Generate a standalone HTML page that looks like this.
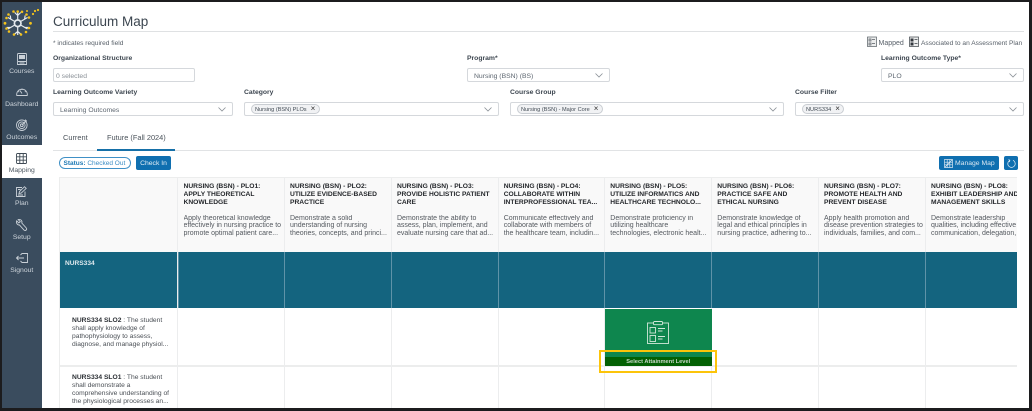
<!DOCTYPE html>
<html><head><meta charset="utf-8"><style>
html,body{margin:0;padding:0;width:1032px;height:411px;overflow:hidden;background:#1c1c1e}
*{box-sizing:border-box}
body{font-family:"Liberation Sans",sans-serif;position:relative}
.a{position:absolute;white-space:nowrap}
#main{position:absolute;left:41px;top:2px;width:988px;height:406px;background:#fff;overflow:hidden;filter:blur(.3px)}
#page{position:absolute;left:-41px;top:-2px;width:1032px;height:411px}
#side{position:absolute;left:2px;top:2px;width:39.500px;height:406px;background:#3a4c5e;filter:blur(.3px)}
.nl{position:absolute;left:0;width:39.500px;text-align:center;font-size:6.8px;color:#ccd3da;line-height:8px}
.ic{position:absolute;left:14px;fill:none;stroke:#c9d0d7;stroke-width:.9;overflow:visible}
.lb{position:absolute;font-size:6.8px;font-weight:bold;color:#3d4650;white-space:nowrap;line-height:9px}
.in{position:absolute;height:14px;background:#fff;border:1px solid #d5d8dc;border-radius:2px;font-size:6.8px;color:#5d6670;line-height:15.500px;white-space:nowrap}
.ch{position:absolute;top:4px;right:6px;width:8px;height:5px}
.tag{position:absolute;left:5.500px;top:1px;height:10px;border:1px solid #c9cdd2;background:#f1f2f4;border-radius:5px;font-size:5.6px;color:#434c55;line-height:8px;padding:0 3.500px;white-space:nowrap}
.tag b{font-weight:normal;margin-left:4px;font-size:8px;line-height:7px;color:#333}
.h{position:absolute;top:183px;width:102px;font-size:6.7px;line-height:7.75px;font-weight:bold;color:#24272b;white-space:nowrap;overflow:hidden}
.d{position:absolute;top:214.700px;width:102px;font-size:7px;line-height:7.75px;color:#54595f;white-space:nowrap;overflow:hidden}
.v{position:absolute;width:1.200px;background:#ecedee}
.tv{position:absolute;top:252px;height:56px;width:1px;background:#5f93a8}
.sl{position:absolute;left:72px;font-size:6.7px;line-height:8px;color:#4a4f55;white-space:nowrap}
.sl b{color:#2d3136}
</style></head><body>
<div id="main"><div id="page">
<div class="a" style="left:53px;top:12.500px;font-size:13.5px;line-height:18px;color:#3c4650">Curriculum Map</div>
<div class="a" style="left:53px;top:30.500px;width:971px;height:1px;background:#dfe1e3"></div>
<div class="a" style="left:53px;top:39.500px;font-size:6.6px;line-height:8px;color:#59616a">* indicates required field</div>

<div class="lb" style="left:53px;top:54px">Organizational Structure</div>
<div class="in" style="left:53px;top:68px;width:142px;padding-left:2px;color:#8a9097">0 selected</div>
<div class="lb" style="left:467px;top:54px">Program*</div>
<div class="in" style="left:467px;top:68px;width:143px;padding-left:6px">Nursing (BSN) (BS)<svg class="ch" viewBox="0 0 8 5"><path d="M.5.5 4 4 7.500.5" fill="none" stroke="#8a9097" stroke-width=".8"/></svg></div>
<div class="lb" style="left:881px;top:54px">Learning Outcome Type*</div>
<div class="in" style="left:881px;top:68px;width:143px;padding-left:6px">PLO<svg class="ch" viewBox="0 0 8 5"><path d="M.5.5 4 4 7.500.5" fill="none" stroke="#8a9097" stroke-width=".8"/></svg></div>

<div class="lb" style="left:53px;top:88px">Learning Outcome Variety</div>
<div class="in" style="left:53px;top:102px;width:180px;padding-left:6px">Learning Outcomes<svg class="ch" viewBox="0 0 8 5"><path d="M.5.5 4 4 7.500.5" fill="none" stroke="#8a9097" stroke-width=".8"/></svg></div>
<div class="lb" style="left:244px;top:88px">Category</div>
<div class="in" style="left:244px;top:102px;width:255px"><span class="tag">Nursing (BSN) PLOs<b>×</b></span><svg class="ch" viewBox="0 0 8 5"><path d="M.5.5 4 4 7.500.5" fill="none" stroke="#8a9097" stroke-width=".8"/></svg></div>
<div class="lb" style="left:510px;top:88px">Course Group</div>
<div class="in" style="left:510px;top:102px;width:274px"><span class="tag">Nursing (BSN) - Major Core<b>×</b></span><svg class="ch" viewBox="0 0 8 5"><path d="M.5.5 4 4 7.500.5" fill="none" stroke="#8a9097" stroke-width=".8"/></svg></div>
<div class="lb" style="left:795px;top:88px">Course Filter</div>
<div class="in" style="left:795px;top:102px;width:229px"><span class="tag">NURS334<b>×</b></span><svg class="ch" viewBox="0 0 8 5"><path d="M.5.5 4 4 7.500.5" fill="none" stroke="#8a9097" stroke-width=".8"/></svg></div>

<svg class="a" style="left:866.500px;top:36px" width="10" height="11" viewBox="0 0 10 11"><rect x=".5" y="1" width="9" height="9.500" fill="#eceded" stroke="#555c63" stroke-width=".7"/><path d="M2 3h2v2H2zM2 7h2v2H2zM5 3.500h3M5 7.500h3" fill="none" stroke="#555c63" stroke-width=".7"/></svg>
<div class="a" style="left:878.500px;top:38.500px;font-size:7px;line-height:9px;color:#59616a">Mapped</div>
<svg class="a" style="left:909px;top:36px" width="10" height="11" viewBox="0 0 10 11"><rect x=".5" y="1" width="9" height="9.500" fill="#eceded" stroke="#3a4047" stroke-width=".7"/><path d="M1.500 2.500h3v3h-3zM1.500 6.500h3v3h-3z" fill="#33383e"/><path d="M5.500 3.500h3M5.500 7.500h3" fill="none" stroke="#3a4047" stroke-width=".7"/></svg>
<div class="a" style="left:921px;top:38.500px;font-size:6.6px;line-height:9px;color:#59616a">Associated to an Assessment Plan</div>

<div class="a" style="left:63px;top:133px;font-size:7.4px;line-height:10px;color:#4a525a">Current</div>
<div class="a" style="left:107px;top:133px;font-size:7.4px;line-height:10px;color:#4a525a">Future (Fall 2024)</div>
<div class="a" style="left:53px;top:149.500px;width:971px;height:1px;background:#e1e3e5"></div>
<div class="a" style="left:97px;top:148.500px;width:78px;height:2px;background:#1670a8"></div>

<div class="a" style="left:58.500px;top:157px;width:72px;height:12px;border:1px solid #3f90c6;border-radius:6px;font-size:6.5px;line-height:11px;color:#3b8dc4;padding-left:4px"><b style="color:#1a78b5">Status:</b> Checked Out</div>
<div class="a" style="left:136px;top:156px;width:35px;height:14px;background:#0f6fb0;border-radius:2px;font-size:6.8px;line-height:15px;color:#e6f0f7;text-align:center">Check In</div>
<div class="a" style="left:939px;top:156px;width:60px;height:14px;background:#0f6fb0;border-radius:2px;font-size:6.8px;line-height:15px;color:#dbe8f2;padding-left:16px">Manage Map</div>
<svg class="a" style="left:944px;top:158.500px" width="9" height="9" viewBox="0 0 9 9"><path d="M.5.500h8v8h-8zM.5 3.200h8M.5 5.800h8M3.200.500v8M5.800.500v8M1 8 8 1" fill="none" stroke="#dbe8f2" stroke-width=".7"/></svg>
<div class="a" style="left:1004px;top:156px;width:14px;height:14px;background:#0f6fb0;border-radius:2px"></div>
<svg class="a" style="left:1006.500px;top:158.500px" width="9" height="9" viewBox="0 0 9 9"><path d="M3 1.300A3.700 3.700 0 1 0 6 1.300M3 1.300 1.500.5M3 1.300 2.400 3" fill="none" stroke="#e3eef6" stroke-width=".7"/></svg>

<!-- table -->
<div class="a" style="left:59px;top:177px;width:958px;height:75px;background:#f9f9f9"></div>
<div class="a" style="left:59px;top:176.500px;width:958px;height:1px;background:#eceded"></div>
<div class="a" style="left:59px;top:252px;width:958px;height:56px;background:#14647f"></div>
<div class="a" style="left:59px;top:365.200px;width:958px;height:1.500px;background:#eceded"></div>
<div class="a" style="left:58.500px;top:177px;width:1px;height:231px;background:#eceded"></div>
<div class="v" style="left:177.300px;top:177px;height:231px"></div>
<div class="v" style="left:284px;top:177px;height:231px"></div>
<div class="v" style="left:391px;top:177px;height:231px"></div>
<div class="v" style="left:497.500px;top:177px;height:231px"></div>
<div class="v" style="left:604px;top:177px;height:231px"></div>
<div class="v" style="left:711px;top:177px;height:231px"></div>
<div class="v" style="left:818px;top:177px;height:231px"></div>
<div class="v" style="left:925px;top:177px;height:231px"></div>
<div class="tv" style="left:177.500px"></div><div class="tv" style="left:284px"></div><div class="tv" style="left:391px"></div><div class="tv" style="left:497.500px"></div><div class="tv" style="left:604px"></div><div class="tv" style="left:711px"></div><div class="tv" style="left:818px"></div><div class="tv" style="left:925px"></div>

<div class="h" style="left:183.500px">NURSING (BSN) - PLO1:<br>APPLY THEORETICAL<br>KNOWLEDGE</div>
<div class="d" style="left:183.500px">Apply theoretical knowledge<br>effectively in nursing practice to<br>promote optimal patient care...</div>
<div class="h" style="left:290px">NURSING (BSN) - PLO2:<br>UTILIZE EVIDENCE-BASED<br>PRACTICE</div>
<div class="d" style="left:290px">Demonstrate a solid<br>understanding of nursing<br>theories, concepts, and princi...</div>
<div class="h" style="left:397px">NURSING (BSN) - PLO3:<br>PROVIDE HOLISTIC PATIENT<br>CARE</div>
<div class="d" style="left:397px">Demonstrate the ability to<br>assess, plan, implement, and<br>evaluate nursing care that ad...</div>
<div class="h" style="left:503.700px">NURSING (BSN) - PLO4:<br>COLLABORATE WITHIN<br>INTERPROFESSIONAL TEA...</div>
<div class="d" style="left:503.700px">Communicate effectively and<br>collaborate with members of<br>the healthcare team, includin...</div>
<div class="h" style="left:610.300px">NURSING (BSN) - PLO5:<br>UTILIZE INFORMATICS AND<br>HEALTHCARE TECHNOLO...</div>
<div class="d" style="left:610.300px">Demonstrate proficiency in<br>utilizing healthcare<br>technologies, electronic healt...</div>
<div class="h" style="left:717.300px">NURSING (BSN) - PLO6:<br>PRACTICE SAFE AND<br>ETHICAL NURSING</div>
<div class="d" style="left:717.300px">Demonstrate knowledge of<br>legal and ethical principles in<br>nursing practice, adhering to...</div>
<div class="h" style="left:824px">NURSING (BSN) - PLO7:<br>PROMOTE HEALTH AND<br>PREVENT DISEASE</div>
<div class="d" style="left:824px">Apply health promotion and<br>disease prevention strategies to<br>individuals, families, and com...</div>
<div class="h" style="left:931px;width:86px">NURSING (BSN) - PLO8:<br>EXHIBIT LEADERSHIP AND<br>MANAGEMENT SKILLS</div>
<div class="d" style="left:931px;width:86px">Demonstrate leadership<br>qualities, including effective<br>communication, delegation, a</div>

<div class="a" style="left:65px;top:259.500px;font-size:6.6px;line-height:8px;font-weight:bold;color:#dfe9ee">NURS334</div>

<div class="sl" style="top:316.500px"><b>NURS334 SLO2</b> : The student<br>shall apply knowledge of<br>pathophysiology to assess,<br>diagnose, and manage physiol...</div>
<div class="sl" style="top:373.500px"><b>NURS334 SLO1</b> : The student<br>shall demonstrate a<br>comprehensive understanding of<br>the physiological processes an...</div>

<!-- green -->
<div class="a" style="left:605px;top:309px;width:106.500px;height:57px;background:#0e864e"></div>
<div class="a" style="left:605px;top:357px;width:106.500px;height:9px;background:#036003"></div>
<div class="a" style="left:605px;top:357px;width:106.500px;height:9px;font-size:5.7px;line-height:10px;font-weight:bold;color:#c6d6c6;text-align:center">Select Attainment Level</div>
<svg class="a" style="left:647px;top:321px" width="22" height="23" viewBox="0 0 22 23"><g fill="none" stroke="#d2e8da" stroke-width=".9"><rect x=".5" y="2" width="21" height="20.500"/><rect x="6.500" y=".5" width="9" height="3.200" rx="1" fill="#0e864e"/><rect x="3" y="6.500" width="5.500" height="5.500"/><rect x="3" y="14.500" width="5.500" height="6"/><path d="M11 7.500h7M11 10h4.500M11 15.500h7M11 18h4.500"/></g></svg>
<div class="a" style="left:599px;top:349.500px;width:118px;height:23px;border:2.200px solid #fcc40a"></div>
</div></div>

<div id="side">
<svg style="position:absolute;left:0;top:0" width="39" height="40" viewBox="0 0 39 40"><g stroke="#e4e9ed" stroke-width="1.200" fill="none"><circle cx="15.700" cy="21.300" r="3.300" stroke-width="1.700"/><path d="M15.700 18V10M15.700 24.500V33M12.800 19.500 6 15.500M18.600 19.500 25.500 15.500M12.800 23 6 27M18.600 23 25.500 27M15.700 13.500l-3-3M15.700 13.500l3-3M15.700 29.500l-3 2.500M15.700 29.500l3 2.500M8.800 17.500l-.5-4M22.600 17.500l.5-4M8.800 25.500l-4 0M22.600 25.500l4 0"/></g><g fill="#f3c21b"><circle cx="15.700" cy="9.500" r="1.300"/><circle cx="11.500" cy="9.500" r="1.300"/><circle cx="20" cy="9.800" r="1.300"/><circle cx="6.500" cy="12.500" r="1.300"/><circle cx="4.500" cy="16" r="1.300"/><circle cx="3" cy="21.300" r="1.400"/><circle cx="4.500" cy="26.500" r="1.300"/><circle cx="7" cy="29.500" r="1.300"/><circle cx="12" cy="32.500" r="1.300"/><circle cx="19" cy="32.500" r="1.300"/><circle cx="24" cy="30" r="1.300"/><circle cx="27" cy="26" r="1.300"/><circle cx="28.500" cy="21.300" r="1.400"/><circle cx="27" cy="15.500" r="1.300"/><circle cx="24.500" cy="12.500" r="1.300"/><circle cx="25" cy="9" r="1"/><circle cx="31" cy="12" r="1.100"/><circle cx="33" cy="9" r="1.100"/><circle cx="36" cy="8" r="1.100"/></g></svg>

<svg class="ic" style="top:51px;left:15px" width="10" height="12" viewBox="0 0 10 12"><rect x=".5" y=".5" width="9" height="8" rx=".8"/><rect x="2" y="2" width="6" height="4" fill="#c9d0d7" stroke="none"/><path d="M.5 8.500v3h9v-3M2.500 10h5"/></svg>
<div class="nl" style="top:66px">Courses</div>
<svg class="ic" style="top:85px" width="12" height="9" viewBox="0 0 12 9"><path d="M.8 8.500a5.300 5.300 0 1 1 10.400 0zM6 6.500 4 3.500M2.200 4.500l1 .5M9.800 4.500l-1 .5M6 1.500V3"/></svg>
<div class="nl" style="top:99px">Dashboard</div>
<svg class="ic" style="top:117px" width="12" height="12" viewBox="0 0 12 12"><circle cx="5.800" cy="6.200" r="5.300"/><circle cx="5.800" cy="6.200" r="3.300"/><circle cx="5.800" cy="6.200" r="1.400"/><path d="M5.800 6.200 10.500 1.500M9.500 .5v1.500H11"/></svg>
<div class="nl" style="top:132px">Outcomes</div>

<div style="position:absolute;left:0;top:143px;width:39.500px;height:33px;background:#fff"></div>
<svg class="ic" style="top:151px;stroke:#3f4a55" width="11" height="11" viewBox="0 0 11 11"><rect x=".5" y=".5" width="10" height="10" rx="1"/><path d="M3.800.5v10M7.200.5v10M.5 3.800h10M.5 7.200h10"/></svg>
<div class="nl" style="top:165px;color:#4d5761">Mapping</div>

<svg class="ic" style="top:184px" width="11" height="11" viewBox="0 0 11 11"><path d="M9 5.500v5H.5V1.500H6"/><path d="M3 7.500l.5-2L8.500.7l1.700 1.700-5 4.700zM2 3.500h2.500M2 9h5"/></svg>
<div class="nl" style="top:198px">Plan</div>
<svg class="ic" style="top:217px" width="11" height="12" viewBox="0 0 11 12"><path d="M.7 1.800 2.800 3.900l1.500-1.200L2.200.6C4.500-.2 6.600 1.800 5.800 4l4.500 5c.8 1 0 2.500-1.200 2.500-.5 0-.8-.2-1.200-.6l-4.500-5C1.800 6.400-.2 4.200.7 1.800z"/></svg>
<div class="nl" style="top:232px">Setup</div>
<svg class="ic" style="top:251px" width="12" height="10" viewBox="0 0 12 10"><path d="M4.500 2 6 .5h5.500v9H6L4.500 8M.5 5H8M2.500 3 .5 5l2 2"/></svg>
<div class="nl" style="top:265px">Signout</div>
</div>
</body></html>
